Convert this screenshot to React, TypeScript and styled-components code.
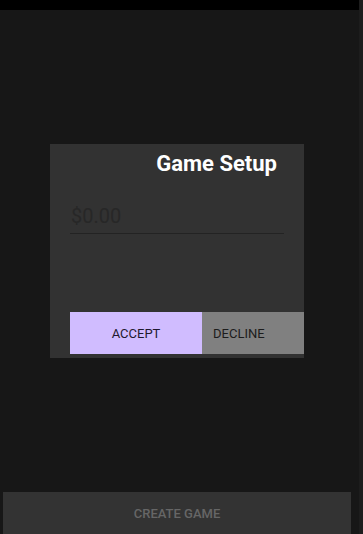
import { createGlobalStyle, styled } from "styled-components";

const GlobalStyle = createGlobalStyle`
  html, body {
    margin: 0;
    padding: 0;
    background: #171717;
    font-family: Roboto, "Noto Sans", sans-serif;
  }
`;

const Screen = styled.div`
  width: 359px;
  height: 534px;
  border-right: 4px solid #1d1d1d;
  display: flex;
  flex-direction: column;
  background: #171717;
  overflow: hidden;
`;

const StatusBar = styled.div`
  height: 10px;
  background: #000;
  flex-shrink: 0;
`;

const Body = styled.div`
  flex: 1;
  display: flex;
  align-items: center;
  justify-content: center;
  padding-right: 5px;
`;

const Dialog = styled.div`
  width: 254px;
  height: 214px;
  box-sizing: border-box;
  background: #323232;
  padding: 7px 0 4px 20px;
  display: flex;
  flex-direction: column;
`;

const Title = styled.h2`
  margin: 0;
  padding-right: 27px;
  text-align: right;
  color: #fff;
  font-size: 22px;
  font-weight: 700;
`;

const AmountInput = styled.input`
  margin-top: 28px;
  width: 214px;
  box-sizing: border-box;
  padding: 0 0 5px 1px;
  border: none;
  border-bottom: 1px solid #232323;
  background: transparent;
  font-family: inherit;
  font-size: 20px;
  color: #ddd;
  outline: none;

  &::placeholder {
    color: #272727;
  }
`;

const Actions = styled.div`
  margin-top: auto;
  display: flex;
  height: 42px;
`;

const ActionButton = styled.button<{ $primary?: boolean }>`
  border: none;
  height: 100%;
  width: ${(p) => (p.$primary ? "132px" : "102px")};
  background: ${(p) => (p.$primary ? "#d0bcff" : "#808080")};
  color: ${(p) => (p.$primary ? "#1f1a2e" : "#1c1c1c")};
  font-family: inherit;
  font-size: 13px;
  font-weight: 400;
  text-align: ${(p) => (p.$primary ? "center" : "left")};
  padding: ${(p) => (p.$primary ? "0" : "0 0 0 11px")};
  cursor: pointer;
`;

const Footer = styled.div`
  padding: 0 8px 0 3px;
  flex-shrink: 0;
`;

const CreateButton = styled.button`
  width: 100%;
  height: 42px;
  border: none;
  background: #333;
  color: #666;
  font-family: inherit;
  font-size: 13px;
  font-weight: 500;
`;

export default function App() {
  return (
    <>
      <GlobalStyle />
      <Screen>
        <StatusBar />
        <Body>
          <Dialog>
            <Title>Game Setup</Title>
            <AmountInput placeholder="$0.00" />
            <Actions>
              <ActionButton $primary>ACCEPT</ActionButton>
              <ActionButton>DECLINE</ActionButton>
            </Actions>
          </Dialog>
        </Body>
        <Footer>
          <CreateButton disabled>CREATE GAME</CreateButton>
        </Footer>
      </Screen>
    </>
  );
}
